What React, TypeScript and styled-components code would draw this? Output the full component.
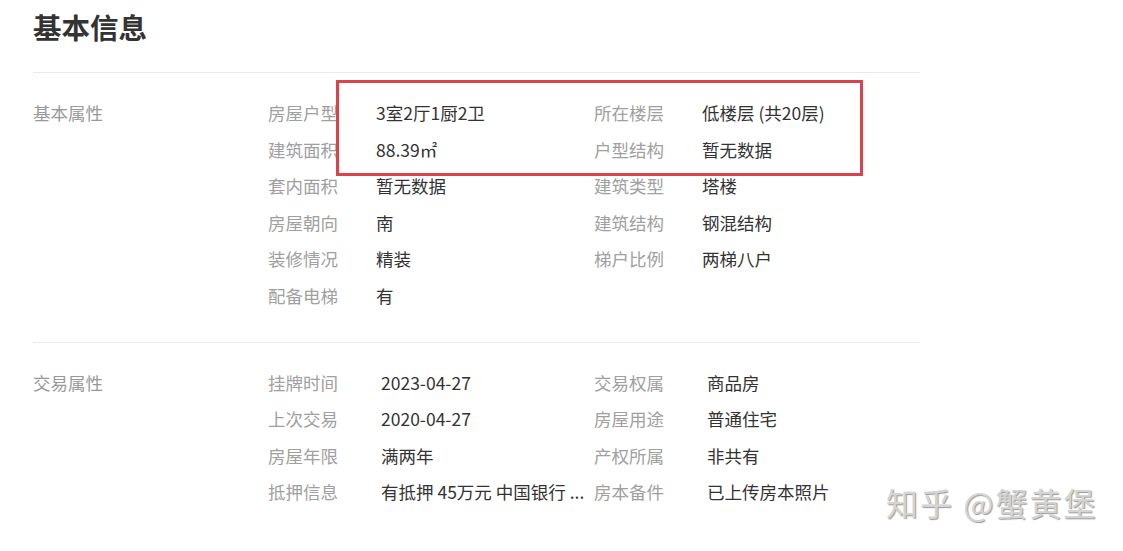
import React from 'react';
import styled, { createGlobalStyle } from 'styled-components';

const GlobalStyle = createGlobalStyle`
  html, body {
    margin: 0;
    padding: 0;
    background: #fff;
  }
  body {
    font-family: "Noto Sans CJK SC", "Microsoft YaHei", sans-serif;
    color: #333;
  }
`;

const Page = styled.div`
  position: relative;
  width: 1123px;
  height: 551px;
  overflow: hidden;
  padding-left: 33px;
  box-sizing: border-box;
`;

const Title = styled.h2`
  margin: 0;
  padding-top: 8px;
  height: 72px;
  box-sizing: border-box;
  font-size: 28.5px;
  font-weight: 700;
  line-height: 38px;
  color: #333;
`;

const Section = styled.div`
  width: 887px;
  border-top: 1px solid #eaeaea;
  display: flex;
  padding: 22px 0 27px;
  box-sizing: border-box;
`;

const SectionLabel = styled.div`
  width: 235px;
  flex-shrink: 0;
  font-size: 17.5px;
  line-height: 36.6px;
  color: #999;
`;

const Grid = styled.div<{ $labelW: number }>`
  display: grid;
  grid-template-columns: ${p => p.$labelW}px ${p => 326 - p.$labelW}px ${p => p.$labelW}px 1fr;
  grid-auto-rows: 36.6px;
  flex: 1;
`;

const Key = styled.div`
  font-size: 17.5px;
  line-height: 36.6px;
  color: #a0a0a0;
  white-space: nowrap;
`;

const Value = styled.div`
  font-size: 17.5px;
  line-height: 36.6px;
  color: #333;
  white-space: nowrap;
`;

const Highlight = styled.div`
  position: absolute;
  left: 336px;
  top: 80px;
  width: 527px;
  height: 96px;
  border: 3px solid #d9434b;
  box-sizing: border-box;
  pointer-events: none;
`;

const Watermark = styled.div`
  position: absolute;
  left: 886px;
  top: 479px;
  font-size: 32px;
  letter-spacing: 2px;
  color: #d4d4d4;
  text-shadow: 1px 1px 1px #9a9a9a;
  white-space: nowrap;
`;

type Pair = [string, string];

const basic: Pair[][] = [
  [['房屋户型', '3室2厅1厨2卫'], ['所在楼层', '低楼层 (共20层)']],
  [['建筑面积', '88.39㎡'], ['户型结构', '暂无数据']],
  [['套内面积', '暂无数据'], ['建筑类型', '塔楼']],
  [['房屋朝向', '南'], ['建筑结构', '钢混结构']],
  [['装修情况', '精装'], ['梯户比例', '两梯八户']],
  [['配备电梯', '有']],
];

const trade: Pair[][] = [
  [['挂牌时间', '2023-04-27'], ['交易权属', '商品房']],
  [['上次交易', '2020-04-27'], ['房屋用途', '普通住宅']],
  [['房屋年限', '满两年'], ['产权所属', '非共有']],
  [['抵押信息', '有抵押 45万元 中国银行 ...'], ['房本备件', '已上传房本照片']],
];

const InfoGrid: React.FC<{ rows: Pair[][]; labelW: number }> = ({ rows, labelW }) => (
  <Grid $labelW={labelW}>
    {rows.map((row, i) => (
      <React.Fragment key={i}>
        {row.map(([k, v]) => (
          <React.Fragment key={k}>
            <Key>{k}</Key>
            <Value>{v}</Value>
          </React.Fragment>
        ))}
        {row.length < 2 && (
          <>
            <div />
            <div />
          </>
        )}
      </React.Fragment>
    ))}
  </Grid>
);

export default function App() {
  return (
    <>
      <GlobalStyle />
      <Page>
        <Title>基本信息</Title>
        <Section>
          <SectionLabel>基本属性</SectionLabel>
          <InfoGrid rows={basic} labelW={108} />
        </Section>
        <Section>
          <SectionLabel>交易属性</SectionLabel>
          <InfoGrid rows={trade} labelW={113} />
        </Section>
        <Highlight />
        <Watermark>知乎 @蟹黄堡</Watermark>
      </Page>
    </>
  );
}
